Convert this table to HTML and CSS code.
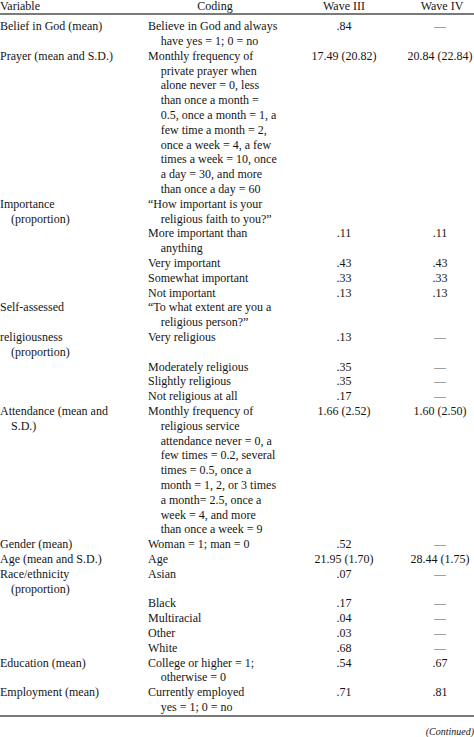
FILE: index.html
```html
<!DOCTYPE html>
<html lang="en">
<head>
<meta charset="utf-8">
<title>Variables and coding</title>
<link rel="stylesheet" href="styles.css">
</head>
<body>
<div class="page">
  <table class="vars">
    <colgroup>
      <col class="c-var">
      <col class="c-code">
      <col class="c-w3">
      <col class="c-w4">
    </colgroup>
    <thead>
      <tr>
        <th class="h-var">Variable</th>
        <th class="h-code">Coding</th>
        <th class="h-w3">Wave III</th>
        <th class="h-w4">Wave IV</th>
      </tr>
    </thead>
    <tbody>
      <tr>
        <td class="var">Belief in God (mean)</td>
        <td class="code">Believe in God and always<br>have yes = 1; 0 = no</td>
        <td class="w3">.84</td>
        <td class="w4 dash">—</td>
      </tr>
      <tr>
        <td class="var">Prayer (mean and S.D.)</td>
        <td class="code">Monthly frequency of<br>private prayer when<br>alone never = 0, less<br>than once a month =<br>0.5, once a month = 1, a<br>few time a month = 2,<br>once a week = 4, a few<br>times a week = 10, once<br>a day = 30, and more<br>than once a day = 60</td>
        <td class="w3">17.49 (20.82)</td>
        <td class="w4">20.84 (22.84)</td>
      </tr>
      <tr>
        <td class="var">Importance<br>(proportion)</td>
        <td class="code">“How important is your<br>religious faith to you?”</td>
        <td class="w3"></td>
        <td class="w4"></td>
      </tr>
      <tr>
        <td class="var"></td>
        <td class="code">More important than<br>anything</td>
        <td class="w3">.11</td>
        <td class="w4">.11</td>
      </tr>
      <tr>
        <td class="var"></td>
        <td class="code">Very important</td>
        <td class="w3">.43</td>
        <td class="w4">.43</td>
      </tr>
      <tr>
        <td class="var"></td>
        <td class="code">Somewhat important</td>
        <td class="w3">.33</td>
        <td class="w4">.33</td>
      </tr>
      <tr>
        <td class="var"></td>
        <td class="code">Not important</td>
        <td class="w3">.13</td>
        <td class="w4">.13</td>
      </tr>
      <tr>
        <td class="var">Self-assessed</td>
        <td class="code">“To what extent are you a<br>religious person?”</td>
        <td class="w3"></td>
        <td class="w4"></td>
      </tr>
      <tr>
        <td class="var">religiousness<br>(proportion)</td>
        <td class="code">Very religious</td>
        <td class="w3">.13</td>
        <td class="w4 dash">—</td>
      </tr>
      <tr>
        <td class="var"></td>
        <td class="code">Moderately religious</td>
        <td class="w3">.35</td>
        <td class="w4 dash">—</td>
      </tr>
      <tr>
        <td class="var"></td>
        <td class="code">Slightly religious</td>
        <td class="w3">.35</td>
        <td class="w4 dash">—</td>
      </tr>
      <tr>
        <td class="var"></td>
        <td class="code">Not religious at all</td>
        <td class="w3">.17</td>
        <td class="w4 dash">—</td>
      </tr>
      <tr>
        <td class="var">Attendance (mean and<br>S.D.)</td>
        <td class="code">Monthly frequency of<br>religious service<br>attendance never = 0, a<br>few times = 0.2, several<br>times = 0.5, once a<br>month = 1, 2, or 3 times<br>a month= 2.5, once a<br>week = 4, and more<br>than once a week = 9</td>
        <td class="w3">1.66 (2.52)</td>
        <td class="w4">1.60 (2.50)</td>
      </tr>
      <tr>
        <td class="var">Gender (mean)</td>
        <td class="code">Woman = 1; man = 0</td>
        <td class="w3">.52</td>
        <td class="w4 dash">—</td>
      </tr>
      <tr>
        <td class="var">Age (mean and S.D.)</td>
        <td class="code">Age</td>
        <td class="w3">21.95 (1.70)</td>
        <td class="w4">28.44 (1.75)</td>
      </tr>
      <tr>
        <td class="var">Race/ethnicity<br>(proportion)</td>
        <td class="code">Asian</td>
        <td class="w3">.07</td>
        <td class="w4 dash">—</td>
      </tr>
      <tr>
        <td class="var"></td>
        <td class="code">Black</td>
        <td class="w3">.17</td>
        <td class="w4 dash">—</td>
      </tr>
      <tr>
        <td class="var"></td>
        <td class="code">Multiracial</td>
        <td class="w3">.04</td>
        <td class="w4 dash">—</td>
      </tr>
      <tr>
        <td class="var"></td>
        <td class="code">Other</td>
        <td class="w3">.03</td>
        <td class="w4 dash">—</td>
      </tr>
      <tr>
        <td class="var"></td>
        <td class="code">White</td>
        <td class="w3">.68</td>
        <td class="w4 dash">—</td>
      </tr>
      <tr>
        <td class="var">Education (mean)</td>
        <td class="code">College or higher = 1;<br>otherwise = 0</td>
        <td class="w3">.54</td>
        <td class="w4">.67</td>
      </tr>
      <tr class="last">
        <td class="var">Employment (mean)</td>
        <td class="code">Currently employed<br>yes = 1; 0 = no</td>
        <td class="w3">.71</td>
        <td class="w4">.81</td>
      </tr>
    </tbody>
  </table>
  <p class="continued">(Continued)</p>
</div>
</body>
</html>
```

FILE: styles.css
```css
html, body {
  margin: 0;
  padding: 0;
  overflow: hidden;
  background: #ffffff;
}

.page {
  width: 474px;
  font-family: "Liberation Serif", "Times New Roman", serif;
  font-size: 12px;
  color: #151515;
}

.vars {
  width: 474px;
  table-layout: fixed;
  border-collapse: collapse;
  border-spacing: 0;
}

.c-var { width: 148px; }
.c-code { width: 144px; }
.c-w3 { width: 104px; }
.c-w4 { width: 78px; }

.vars th {
  font-weight: normal;
  line-height: 12px;
  padding: 0 0 1px 0;
  border-bottom: 2px solid #7a7a7a;
  white-space: nowrap;
}

.h-var { text-align: left; }
.h-code { text-align: center; padding-right: 10px !important; }
.h-w3 { text-align: center; }
.h-w4 { text-align: center; padding-left: 14px !important; }

.vars td {
  padding: 0;
  line-height: 14.8px;
  vertical-align: top;
  white-space: nowrap;
}

.vars tbody tr:first-child td {
  padding-top: 4.3px;
}

.vars tr.last td {
  border-bottom: 2px solid #7a7a7a;
}

.var {
  padding-left: 11px !important;
  text-indent: -11px;
}

.code {
  padding-left: 12.7px !important;
  text-indent: -12.7px;
}

.w3 {
  text-align: center;
}

.w4 {
  text-align: center;
  padding-left: 10px !important;
}

.dash {
  color: #555;
}

.continued {
  margin: 9px 0 0 0;
  text-align: right;
  font-style: italic;
  font-size: 10px;
  line-height: 12px;
}
```
